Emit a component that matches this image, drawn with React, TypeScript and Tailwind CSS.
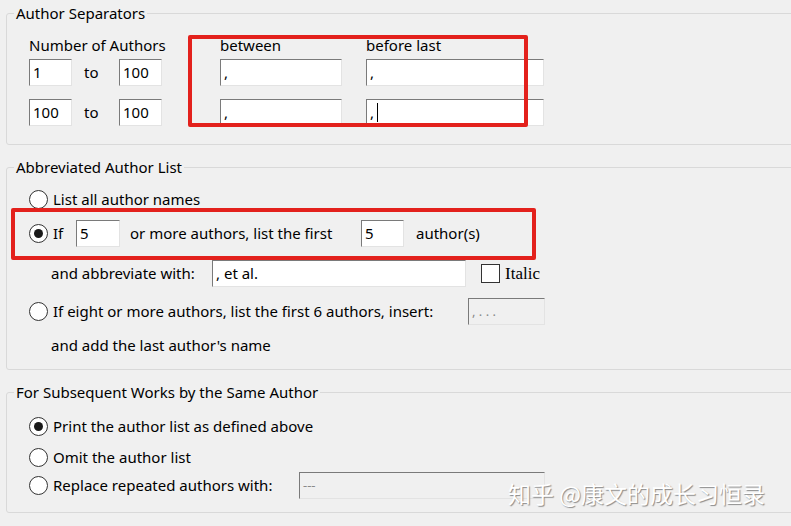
import React from 'react';

const FONT = { fontFamily: '"Noto Sans", "Liberation Sans", sans-serif' };

type BoxProps = { w: string; value?: string; disabled?: boolean; caret?: boolean };

const TextBox: React.FC<BoxProps> = ({ w, value = '', disabled, caret }) => (
  <div
    className={`${w} h-[27px] shrink-0 flex items-center pl-[3px] border border-t-[#7a7a7a] border-l-[#7a7a7a] border-r-[#e3e3e3] border-b-[#e3e3e3] ${
      disabled ? 'bg-[#f0f0f0] text-[#8a8a8a] text-[13px]' : 'bg-white text-black'
    }`}
  >
    <span className="whitespace-pre">{value}</span>
    {caret && <span className="ml-[3px] w-px h-[19px] bg-black" />}
  </div>
);

const Radio: React.FC<{ checked?: boolean }> = ({ checked }) => (
  <span className="w-[19px] h-[19px] shrink-0 rounded-full border border-[#333] bg-white flex items-center justify-center">
    {checked && <span className="w-[9px] h-[9px] rounded-full bg-[#1a1a1a]" />}
  </span>
);

const Group: React.FC<{ title: string; className?: string; children: React.ReactNode }> = ({ title, className = '', children }) => (
  <fieldset className={`w-[810px] border border-[#d9d9d9] rounded-[3px] ${className}`}>
    <legend className="ml-[7px] px-[2px] leading-[20px]">{title}</legend>
    <div className="pl-[22px]">{children}</div>
  </fieldset>
);

const App: React.FC = () => {
  return (
    <div className="relative w-[791px] h-[526px] overflow-hidden bg-[#f0f0f0] text-[15px] text-black pl-[6px] pt-[3px]" style={FONT}>
      {/* Author Separators */}
      <Group title="Author Separators" className="pb-[18px]">
        <div className="grid grid-cols-[43px_47px_43px_58px_122px_24px_178px] pt-[12px] leading-[20px] whitespace-nowrap">
          <div className="col-span-3">Number of Authors</div>
          <div className="col-start-5">between</div>
          <div className="col-start-7">before last</div>
        </div>
        <div className="flex items-center mt-[4px]">
          <TextBox w="w-[43px]" value="1" />
          <span className="w-[47px] pl-[12px]">to</span>
          <TextBox w="w-[43px]" value="100" />
          <span className="w-[58px]" />
          <TextBox w="w-[122px]" value="," />
          <span className="w-[24px]" />
          <TextBox w="w-[178px]" value="," />
        </div>
        <div className="flex items-center mt-[13px]">
          <TextBox w="w-[43px]" value="100" />
          <span className="w-[47px] pl-[12px]">to</span>
          <TextBox w="w-[43px]" value="100" />
          <span className="w-[58px]" />
          <TextBox w="w-[122px]" value="," />
          <span className="w-[24px]" />
          <TextBox w="w-[178px]" value="," caret />
        </div>
      </Group>

      {/* Abbreviated Author List */}
      <Group title="Abbreviated Author List" className="mt-[12px] pb-[14px]">
        <div className="flex items-center h-[20px] mt-[12px] gap-[5px]">
          <Radio />
          <span>List all author names</span>
        </div>
        <div className="flex items-center h-[27px] mt-[11px]">
          <Radio checked />
          <span className="ml-[5px] w-[23px]">If</span>
          <TextBox w="w-[44px]" value="5" />
          <span className="ml-[10px] w-[231px]">or more authors, list the first</span>
          <TextBox w="w-[43px]" value="5" />
          <span className="ml-[12px]">author(s)</span>
        </div>
        <div className="flex items-center h-[27px] mt-[13px]">
          <span className="ml-[22px] w-[161px]">and abbreviate with:</span>
          <TextBox w="w-[254px]" value=", et al." />
          <span className="ml-[15px] w-[19px] h-[19px] border border-[#333] bg-white" />
          <span className="ml-[5px] text-[17px]" style={{ fontFamily: '"Liberation Serif", serif' }}>Italic</span>
        </div>
        <div className="flex items-center h-[27px] mt-[11px]">
          <Radio />
          <span className="ml-[5px] w-[415px]">If eight or more authors, list the first 6 authors, insert:</span>
          <TextBox w="w-[77px]" value=", . . ." disabled />
        </div>
        <div className="h-[20px] leading-[20px] mt-[10px] ml-[22px]">and add the last author's name</div>
      </Group>

      {/* For Subsequent Works */}
      <Group title="For Subsequent Works by the Same Author" className="mt-[12px] pb-[13px]">
        <div className="flex items-center h-[20px] mt-[14px] gap-[5px]">
          <Radio checked />
          <span>Print the author list as defined above</span>
        </div>
        <div className="flex items-center h-[20px] mt-[11px] gap-[5px]">
          <Radio />
          <span>Omit the author list</span>
        </div>
        <div className="flex items-center h-[27px] mt-[5px]">
          <Radio />
          <span className="ml-[5px] w-[246px]">Replace repeated authors with:</span>
          <TextBox w="w-[246px]" value="---" disabled />
        </div>
      </Group>

      {/* annotation boxes */}
      <div className="absolute left-[188px] top-[35px] w-[340px] h-[92px] border-[4px] border-[#e3211c] rounded-[2px]" />
      <div className="absolute left-[11px] top-[208px] w-[525px] h-[52px] border-[4px] border-[#e3211c] rounded-[2px]" />

      {/* watermark */}
      <div
        className="absolute left-[508px] top-[478px] text-[23px] leading-[30px] text-white"
        style={{ fontFamily: '"Noto Sans CJK SC", sans-serif', textShadow: '1px 1px 1px #8a8a8a' }}
      >
        知乎 @康文的成长习恒录
      </div>
    </div>
  );
};

export default App;
